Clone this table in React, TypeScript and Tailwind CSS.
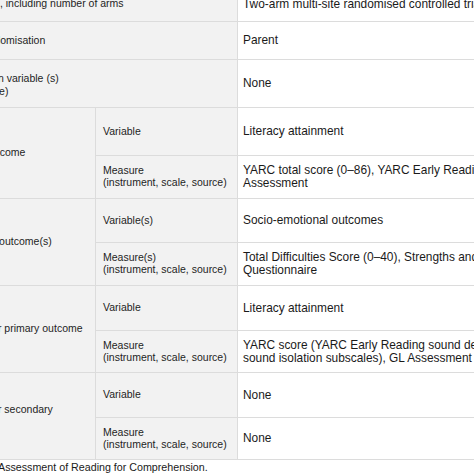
import React from "react";

const font = { fontFamily: '"Liberation Sans", Arial, Helvetica, sans-serif' };

function Label({ children, className = "" }: { children: React.ReactNode; className?: string }) {
  return (
    <div className={`bg-[#f2f2f2] flex items-center pl-[8px] text-[10.5px] leading-[11.7px] text-[#1e1e1e] whitespace-nowrap ${className}`}>
      <div>{children}</div>
    </div>
  );
}

function Sub({ children, className = "" }: { children: React.ReactNode; className?: string }) {
  return (
    <div className={`bg-[#f2f2f2] flex items-center pl-[7px] text-[10.5px] leading-[11.7px] text-[#1e1e1e] whitespace-nowrap ${className}`}>
      <div>{children}</div>
    </div>
  );
}

function Val({ children, className = "" }: { children: React.ReactNode; className?: string }) {
  return (
    <div className={`bg-white flex items-center pl-[5px] text-[11.9px] leading-[12.7px] text-[#1a1a1a] whitespace-nowrap ${className}`}>
      <div>{children}</div>
    </div>
  );
}

export default function App() {
  return (
    <div className="w-[474px] h-[474px] overflow-hidden bg-white relative" style={font}>
      <div className="ml-[-62px] mt-[-13px] w-[620px]">
        <div className="grid grid-cols-[157px_141px_320px] grid-rows-[34px_37px_47px_47px_42px_43px_42px_44px_41px_44px_41px] gap-px bg-[#dcdcdc] border-b border-[#dcdcdc]">
          <Label className="col-span-2">Trial design, including number of arms</Label>
          <Val>Two-arm multi-site randomised controlled trial</Val>

          <Label className="col-span-2">Unit of randomisation</Label>
          <Val>Parent</Val>

          <Label className="col-span-2 leading-[12.5px] pt-[2px]">
            Stratification variable (s)
            <br />
            (if applicable)
          </Label>
          <Val>None</Val>

          <Label className="row-span-2">Primary outcome</Label>
          <Sub>Variable</Sub>
          <Val>Literacy attainment</Val>
          <Sub>
            Measure
            <br />
            (instrument, scale, source)
          </Sub>
          <Val>
            YARC total score (0–86), YARC Early Reading
            <br />
            Assessment
          </Val>

          <Label className="row-span-2">Secondary outcome(s)</Label>
          <Sub>Variable(s)</Sub>
          <Val>Socio-emotional outcomes</Val>
          <Sub>
            Measure(s)
            <br />
            (instrument, scale, source)
          </Sub>
          <Val>
            Total Difficulties Score (0–40), Strengths and Difficulties
            <br />
            Questionnaire
          </Val>

          <Label className="row-span-2">Baseline for primary outcome</Label>
          <Sub>Variable</Sub>
          <Val>Literacy attainment</Val>
          <Sub>
            Measure
            <br />
            (instrument, scale, source)
          </Sub>
          <Val>
            YARC score (YARC Early Reading sound deletion and
            <br />
            sound isolation subscales), GL Assessment New Group Reading Test
          </Val>

          <Label className="row-span-2">
            Baseline for secondary
            <br />
            outcome
          </Label>
          <Sub>Variable</Sub>
          <Val>None</Val>
          <Sub>
            Measure
            <br />
            (instrument, scale, source)
          </Sub>
          <Val>None</Val>
        </div>
        <div className="pl-[2px] pt-[1px] text-[10.7px] leading-[12px] text-[#1a1a1a] whitespace-nowrap">
          YARC, York Assessment of Reading for Comprehension.
        </div>
      </div>
    </div>
  );
}
